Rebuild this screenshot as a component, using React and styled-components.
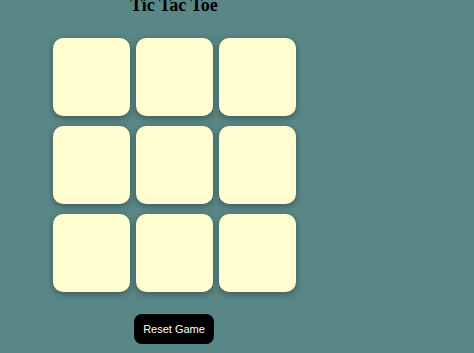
import React from "react";
import styled, { createGlobalStyle } from "styled-components";

const Global = createGlobalStyle`
  html, body { margin: 0; padding: 0; background: #598686; height: 100%; overflow: hidden; }
  body { font-family: "Liberation Serif", serif; }
`;

const Page = styled.div`
  width: 244px;
  margin-left: 52px;
  display: flex;
  flex-direction: column;
  align-items: center;
`;

const Title = styled.h1`
  margin: -5px 0 0 0;
  font-family: "Liberation Serif", serif;
  font-weight: bold;
  font-size: 18px;
  line-height: 21px;
  color: #000;
`;

const Board = styled.div`
  margin-top: 22px;
  display: grid;
  grid-template-columns: repeat(3, 77px);
  grid-auto-rows: 78px;
  column-gap: 6px;
  row-gap: 10px;
`;

const Cell = styled.button`
  border: none;
  padding: 0;
  background: #fffdcf;
  border-radius: 10px;
  box-shadow: 0 2px 6px rgba(0, 0, 0, 0.35);
  cursor: pointer;
`;

const ResetButton = styled.button`
  margin-top: 22px;
  width: 80px;
  height: 30px;
  border: none;
  border-radius: 8px;
  background: #000;
  color: #fff;
  font-family: "Liberation Sans", Arial, sans-serif;
  font-size: 11px;
  cursor: pointer;
`;

export default function App() {
  return (
    <>
      <Global />
      <Page>
        <Title>Tic Tac Toe</Title>
        <Board>
          {Array.from({ length: 9 }).map((_, i) => (
            <Cell key={i} />
          ))}
        </Board>
        <ResetButton>Reset Game</ResetButton>
      </Page>
    </>
  );
}
